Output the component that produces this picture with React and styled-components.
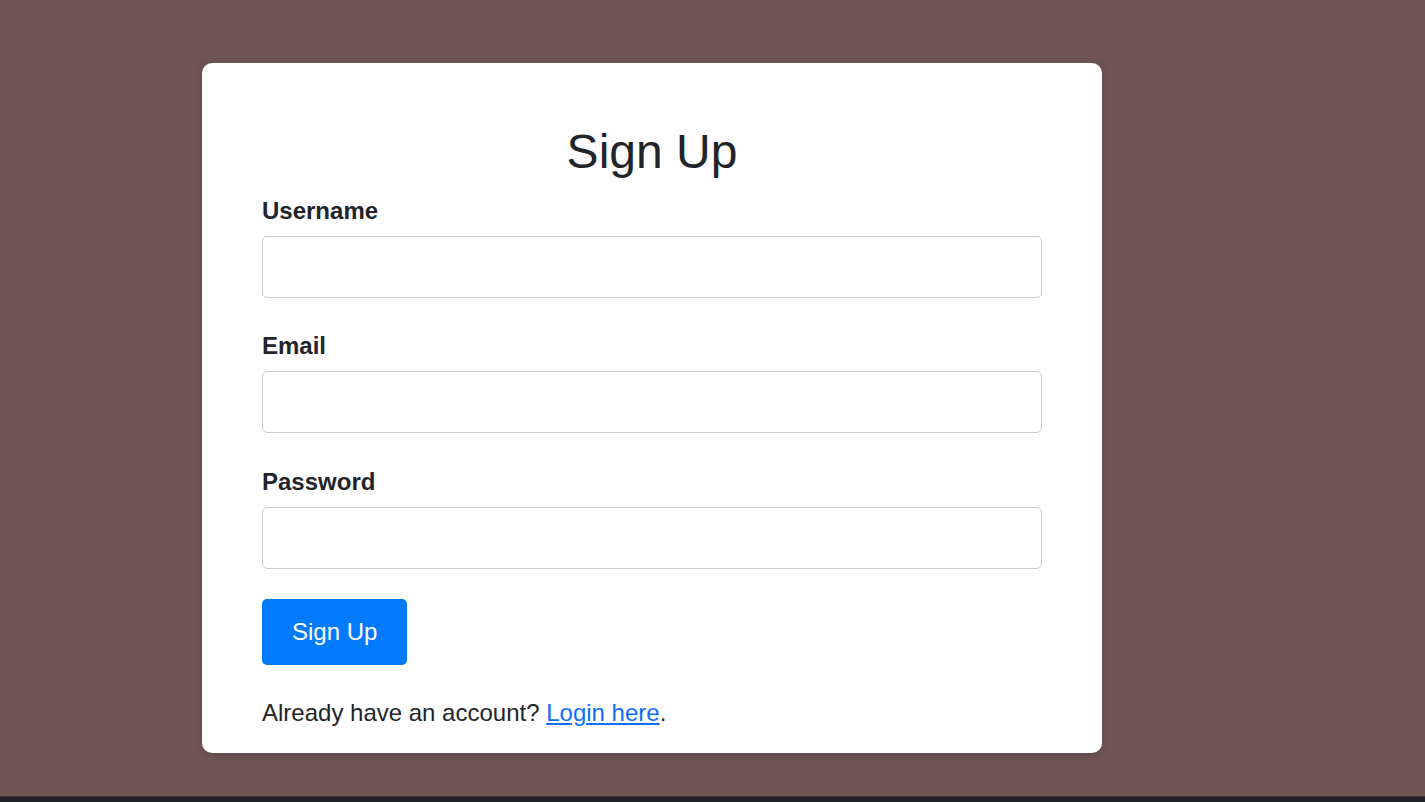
import React from 'react';
import styled, { createGlobalStyle } from 'styled-components';

const GlobalStyle = createGlobalStyle`
  html, body {
    margin: 0;
    padding: 0;
    height: 100%;
  }
  body {
    background: #715555;
    font-family: "Liberation Sans", Arial, sans-serif;
    color: #212529;
  }
  #root {
    min-height: 100vh;
    display: flex;
    flex-direction: column;
  }
`;

const Page = styled.main`
  flex: 1;
  padding: 63px 0 0 202px;
`;

const Card = styled.div`
  width: 900px;
  box-sizing: border-box;
  background: #fff;
  border-radius: 10px;
  box-shadow: 0 2px 10px rgba(0, 0, 0, 0.18);
  padding: 60px 60px 22px;
`;

const Title = styled.h1`
  margin: 0 0 12.4px;
  font-size: 48px;
  font-weight: 400;
  line-height: 1.2;
  text-align: center;
`;

const FormGroup = styled.div`
  display: flex;
  flex-direction: column;
  gap: 7px;
  margin-bottom: ${(p) => (p.last ? '30px' : '30.5px')};
`;

const Label = styled.label`
  font-size: 24px;
  font-weight: 700;
  line-height: 36px;
`;

const Input = styled.input`
  box-sizing: border-box;
  width: 100%;
  height: 62px;
  border: 1px solid #ccc;
  border-radius: 5px;
  padding: 0 16px;
  font-size: 24px;
  font-family: inherit;
  outline: none;
`;

const Button = styled.button`
  display: block;
  background: #007bff;
  color: #fff;
  border: none;
  border-radius: 5px;
  padding: 15px 30px;
  font-size: 24px;
  line-height: 36px;
  font-family: inherit;
  cursor: pointer;
`;

const Note = styled.p`
  margin: 30px 0 0;
  font-size: 24px;
  line-height: 36px;
`;

const Link = styled.a`
  color: #0d6efd;
  text-decoration: underline;
`;

const Taskbar = styled.div`
  height: 5px;
  background: #202124;
  border-top: 1px solid #3c3c3c;
`;

const fields = [
  { id: 'username', label: 'Username', type: 'text' },
  { id: 'email', label: 'Email', type: 'email' },
  { id: 'password', label: 'Password', type: 'password' },
];

export default function App() {
  return (
    <>
      <GlobalStyle />
      <Page>
        <Card>
          <Title>Sign Up</Title>
          <form onSubmit={(e) => e.preventDefault()}>
            {fields.map((f, i) => (
              <FormGroup key={f.id} last={i === fields.length - 1}>
                <Label htmlFor={f.id}>{f.label}</Label>
                <Input id={f.id} type={f.type} />
              </FormGroup>
            ))}
            <Button type="submit">Sign Up</Button>
          </form>
          <Note>
            Already have an account? <Link href="#">Login here</Link>.
          </Note>
        </Card>
      </Page>
      <Taskbar />
    </>
  );
}
